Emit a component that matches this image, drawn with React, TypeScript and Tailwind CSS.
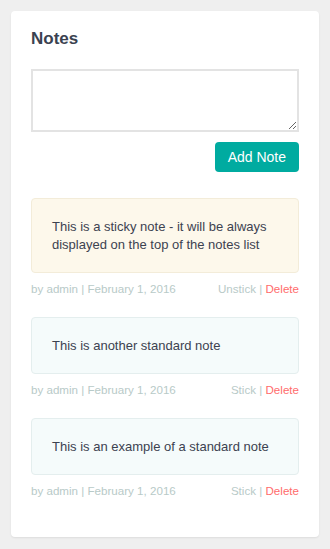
const notes = [
  { text: "This is a sticky note - it will be always displayed on the top of the notes list", sticky: true },
  { text: "This is another standard note", sticky: false },
  { text: "This is an example of a standard note", sticky: false },
]

const App = () => {
  return (
    <div className="min-h-screen bg-[#efefef] p-[11px] font-['Liberation_Sans',Arial,sans-serif]">
      <div className="bg-white rounded-[4px] shadow-[0_1px_2px_rgba(0,0,0,0.08)] px-5 pt-[17px] pb-[39px]">
        <h2 className="text-[17px] leading-[22px] font-bold text-[#3a4250]">Notes</h2>

        {/* Form */}
        <textarea className="mt-[19px] block w-full h-[63px] border-2 border-[#e3e3e3] bg-white outline-none resize-y"></textarea>
        <div className="flex justify-end mt-[10px]">
          <button className="bg-[#00aba0] text-white text-[14px] leading-[30px] h-[30px] px-[13px] rounded-[4px]">
            Add Note
          </button>
        </div>

        {/* Notes */}
        <div className="mt-[26px] flex flex-col gap-[21px]">
          {notes.map((n, i) => (
            <div key={i}>
              <div
                className={
                  n.sticky
                    ? "bg-[#fdf8eb] border border-[#f3ecd9] rounded-[4px] px-5 pt-[19px] pb-[18px] text-[13px] leading-[18px] text-[#3c4250]"
                    : "bg-[#f5fbfb] border border-[#e4eeee] rounded-[4px] px-5 pt-[19px] pb-[18px] text-[13px] leading-[18px] text-[#3c4250]"
                }
              >
                {n.text}
              </div>
              <div className="mt-[8px] flex justify-between text-[11.6px] leading-[15px] text-[#b8cac8]">
                <span>by admin | February 1, 2016</span>
                <span>
                  {n.sticky ? "Unstick" : "Stick"} | <span className="text-[#ff6b6b]">Delete</span>
                </span>
              </div>
            </div>
          ))}
        </div>
      </div>
    </div>
  )
}

export default App
